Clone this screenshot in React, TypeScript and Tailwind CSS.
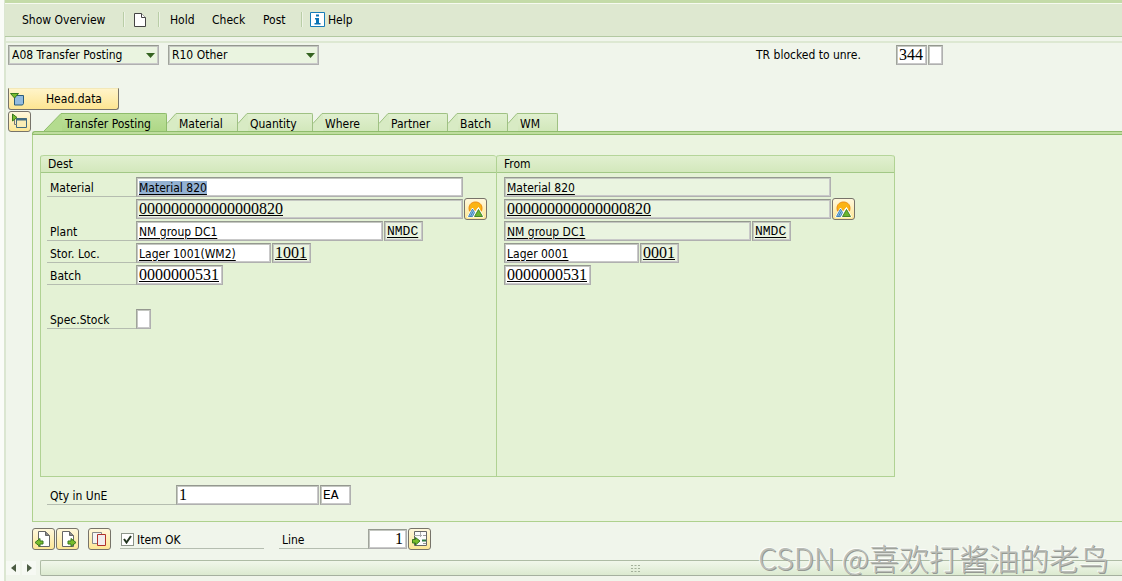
import { useEffect, useRef, type ReactNode } from "react";

const cx = (...parts: (string | false | undefined)[]) => parts.filter(Boolean).join(" ");

type FieldProps = {
  label: string;
  value: string;
  width: string;
  readOnly?: boolean;
  kind?: "text" | "digits" | "code";
  underline?: boolean;
  align?: "left" | "right";
  selected?: boolean;
  id?: string;
};

function Field({ label, value, width, readOnly, kind = "text", underline = true, align = "left", selected, id }: FieldProps) {
  const ref = useRef<HTMLInputElement>(null);
  useEffect(() => {
    if (selected && ref.current) {
      ref.current.focus();
      ref.current.select();
    }
  }, [selected]);
  return (
    <input
      ref={ref}
      id={id}
      aria-label={label}
      defaultValue={value}
      readOnly={readOnly}
      className={cx(
        "h-5 shrink-0 border border-[#b0b0b0] border-t-[#94988f] border-l-[#a0a49b] pl-[2px] text-black shadow-[inset_1px_1px_0_#c4c7c1,inset_-1px_-1px_0_#c9c9c9] outline-none selection:bg-[#94b1d2] selection:text-black",
        width,
        readOnly ? "bg-[#eaf4e0]" : "bg-white",
        kind === "text" && "pt-px text-[12px]",
        kind === "digits" && "font-['Liberation_Serif',serif] text-[16px]",
        kind === "code" && "font-['Liberation_Mono',monospace] text-[13px]",
        underline && kind === "digits" && "underline decoration-1 underline-offset-1",
        underline && kind !== "digits" && "underline decoration-1 underline-offset-2",
        align === "right" && "pr-[3px] text-right",
      )}
    />
  );
}

function Row({ label, htmlFor, labelWidth = "w-[89px]", children }: { label?: string; htmlFor?: string; labelWidth?: string; children: ReactNode }) {
  return (
    <div className="flex h-[22px] items-start">
      {label !== undefined && (
        <label
          htmlFor={htmlFor}
          className={cx("h-5 shrink-0 pt-px pl-[3px] leading-5", labelWidth, label !== "" && "border-b border-[#b5bdb0]")}
        >
          {label}
        </label>
      )}
      <div className="flex items-center gap-px">{children}</div>
    </div>
  );
}

function IconButton({ label, children, small }: { label: string; children: ReactNode; small?: boolean }) {
  return (
    <button
      type="button"
      aria-label={label}
      className={cx(
        "flex w-[23px] shrink-0 items-center justify-center rounded-[3px] border border-[#77736a] bg-linear-to-b from-[#fff8dc] to-[#fde795]",
        small ? "h-[21px]" : "-my-px h-[22px]",
      )}
    >
      {children}
    </button>
  );
}

function PictureIcon() {
  return (
    <svg width="17" height="17" viewBox="0 0 17 17" aria-hidden="true">
      <path d="M2.500 10C.8 4.500 4 1 8.500 1s7.700 3.500 6 9z" fill="#fbb414" stroke="#ee8b0c" />
      <path d="M.5 16 5.500 7l2.500 4 3.500-4.500L16.500 16z" fill="#fff" stroke="#fff" />
      <path d="M1.500 15.500 5.500 8l2 3.500-2 4z" fill="#8ec1e6" stroke="#2c74ad" strokeWidth=".8" />
      <path d="m3.500 15.500 2.500-5" stroke="#2c74ad" strokeWidth=".8" />
      <path d="M7.500 15.500 11.500 8.500l4 7z" fill="#6ab52e" stroke="#3b7e1e" strokeWidth=".9" />
    </svg>
  );
}

function PreviousItemIcon() {
  return (
    <svg width="19" height="19" viewBox="0 0 19 19" aria-hidden="true">
      <path d="M4.500 1.500h7l4 4v11h-11z" fill="#fff" stroke="#666" />
      <path d="M11.500 1.500v4h4" fill="#888" stroke="#666" />
      <path d="m1 12.500 5-4v2.500h3v3H6v2.500z" fill="#78bc2c" stroke="#38791d" />
    </svg>
  );
}

function NextItemIcon() {
  return (
    <svg width="19" height="19" viewBox="0 0 19 19" aria-hidden="true">
      <path d="M4.500 1.500h7l4 4v11h-11z" fill="#fff" stroke="#666" />
      <path d="M11.500 1.500v4h4" fill="#888" stroke="#666" />
      <path d="m18 12.500-5-4v2.500h-3v3h3v2.500z" fill="#78bc2c" stroke="#38791d" />
    </svg>
  );
}

function CopyIcon() {
  return (
    <svg width="17" height="17" viewBox="0 0 17 17" aria-hidden="true">
      <path d="M1.500 1.500h9v11h-9z" fill="#f4f4f4" stroke="#888" />
      <path d="M6.500 3.500h8v11h-8z" fill="#f1ecec" stroke="#b0312b" />
    </svg>
  );
}

function GoToLineIcon() {
  return (
    <svg width="18" height="18" viewBox="0 0 18 18" aria-hidden="true">
      <path d="M3.500 1.500h12v14h-12z" fill="#fbfbfb" stroke="#666" />
      <path d="M3 5.500h8M9.500 2v5" stroke="#aaa" fill="none" />
      <path d="M12 5.500h3M12 13.500h3" stroke="#999" />
      <path d="M11 10.500h4" stroke="#2e7a45" strokeWidth="2" />
      <path d="M1.500 9.500h3v-2l4.500 3.500L4.500 15v-2h-3z" fill="#78bc2c" stroke="#38791d" />
    </svg>
  );
}

function Tab({ label, width, active }: { label: string; width: string; active?: boolean }) {
  return (
    <button type="button" role="tab" aria-selected={!!active} className={cx("flex h-[18px] items-stretch text-left", width)}>
      {active ? (
        <svg width="18" height="18" viewBox="0 0 18 18" className="shrink-0" aria-hidden="true">
          <path d="M0 18 17 .5h1V18z" fill="#b4dc8f" />
          <path d="M0 18 17 .5h1" fill="none" stroke="#8fbc6c" />
        </svg>
      ) : (
        <svg width="10" height="18" viewBox="0 0 10 18" className="shrink-0" aria-hidden="true">
          <path d="M0 10 9 .5h1V18H0z" fill="#d8ebc4" />
          <path d="M0 10.500 9 .5h1" fill="none" stroke="#9fc183" />
        </svg>
      )}
      <span
        className={cx(
          "min-w-0 flex-1 rounded-tr-[2px] border-t border-r leading-5 whitespace-nowrap",
          active
            ? "border-[#8fbc6c] bg-linear-to-b from-[#bde09b] to-[#aed786] pl-[3px]"
            : "border-[#9fc183] bg-linear-to-b from-[#e0f0cf] to-[#d2e7bb] pl-[2px]",
        )}
      >
        {label}
      </span>
    </button>
  );
}

const tabs = [
  { label: "Transfer Posting", width: "w-[123px]", active: true },
  { label: "Material", width: "w-[71px]" },
  { label: "Quantity", width: "w-[75px]" },
  { label: "Where", width: "w-[66px]" },
  { label: "Partner", width: "w-[69px]" },
  { label: "Batch", width: "w-[60px]" },
  { label: "WM", width: "w-[50px]" },
];

function Dropdown({ label, value }: { label: string; value: string }) {
  return (
    <div className="grid w-[151px]">
      <select
        aria-label={label}
        className="col-start-1 row-start-1 h-5 appearance-none border border-[#b0b0b0] border-t-[#94988f] border-l-[#a0a49b] bg-[#eaf4e0] pl-[3px] text-[12px] leading-4 text-black shadow-[inset_1px_1px_0_#c4c7c1,inset_-1px_-1px_0_#c9c9c9]"
      >
        <option>{value}</option>
      </select>
      <svg width="9" height="5" viewBox="0 0 9 5" className="pointer-events-none col-start-1 row-start-1 mr-1 self-center justify-self-end" aria-hidden="true">
        <path d="M0 0h9L4.500 5z" fill="#356321" />
      </svg>
    </div>
  );
}

function Separator() {
  return <span className="h-[15px] w-[2px] border-l border-[#b9cda6] bg-[#edf3e5]" />;
}

function PanelTitle({ children }: { children: ReactNode }) {
  return (
    <h2 className="h-[18px] rounded-t-[3px] border-t border-b border-t-[#b5d59a] border-b-[#a2c886] bg-linear-to-b from-[#e1f0d0] to-[#d3e8bc] pl-[7px] leading-[17px]">
      {children}
    </h2>
  );
}

export default function App() {
  return (
    <div className="flex min-h-screen flex-col overflow-hidden bg-[#fafcf8] pl-1 font-['DejaVu_Sans_Condensed','DejaVu_Sans',sans-serif] text-[12px] text-black">
      <div className="flex flex-1 flex-col border-l-2 border-[#dbe6d1] bg-[#f0f5eb]">
        <header className="-ml-px border-t-[3px] border-[#c4dba8]">
          <nav className="flex h-[34px] items-center border-t border-b border-t-[#f6faf0] border-b-[#b3c9a2] bg-[#dee8d0] pb-px pl-[17px]">
            <button type="button" className="w-[101px] text-left whitespace-nowrap">Show Overview</button>
            <Separator />
            <button type="button" aria-label="Create" className="ml-[8px] mr-[11px]">
              <svg width="14" height="16" viewBox="0 0 14 16" className="block" aria-hidden="true">
                <path d="M1.500 1.500h7l4 4v9h-11z" fill="#fff" stroke="#444" />
                <path d="M8.500 1.500v4h4" fill="#fff" stroke="#444" />
              </svg>
            </button>
            <Separator />
            <button type="button" className="ml-[10px] w-[42px] text-left">Hold</button>
            <button type="button" className="w-[51px] text-left">Check</button>
            <button type="button" className="w-[38px] text-left">Post</button>
            <Separator />
            <button type="button" className="ml-[7px] flex items-center gap-[3px]">
              <svg width="15" height="15" viewBox="0 0 15 15" aria-hidden="true">
                <path d="M.5.5h14v14H.5z" fill="#fff" stroke="#167cb8" />
                <path d="M6 2.500h3v2H6zM5 6h4v5h1.500v1.500h-6V11H6V7.500H5z" fill="#0873b5" />
              </svg>
              Help
            </button>
          </nav>
        </header>

        <main className="mt-1 flex flex-col border-t-2 border-[#dde8d2] pt-[2px]">
          <div className="flex items-center pl-[2px]">
            <Dropdown label="Action" value="A08 Transfer Posting" />
            <div className="ml-[9px]">
              <Dropdown label="Reference document" value="R10 Other" />
            </div>
            <div className="ml-[437px] flex items-center">
              <label htmlFor="movement" className="w-[140px]">TR blocked to unre.</label>
              <div className="flex gap-px">
                <Field id="movement" label="Movement type" value="344" width="w-[31px]" kind="digits" underline={false} />
                <Field label="Special stock indicator" value="" width="w-[15px]" />
              </div>
            </div>
          </div>

          <div className="mt-[23px] pl-[2px]">
            <button
              type="button"
              className="flex h-[22px] w-[111px] items-center rounded-b-[3px] border border-[#77736a] border-t-[#f3e8b8] bg-linear-to-b from-[#fff4c9] to-[#fde591] pl-px"
            >
              <svg width="16" height="15" viewBox="0 0 16 15" aria-hidden="true">
                <path d="M5.500 3.500h8v8l-1 1.500h-8V6z" fill="#93bbdf" stroke="#2b5c7c" />
                <path d="M.5 1.500h8L4.500 6z" fill="#78bc2c" stroke="#38791d" />
              </svg>
              <span className="ml-5">Head.data</span>
            </button>
          </div>

          <div className="flex pl-[2px]">
            <div className="w-6 shrink-0 pt-px">
              <IconButton label="Item overview" small>
                <svg width="17" height="17" viewBox="0 0 17 17" aria-hidden="true">
                  <path d="M5.500 5.500h10v9h-10z" fill="#fbedb5" stroke="#426b80" />
                  <path d="M5 6.500h11" stroke="#426b80" strokeWidth="2" />
                  <path d="M3.500 7v4.500H6" fill="none" stroke="#777" />
                  <path d="M1.500 1v7L6 4.500z" fill="#78bc2c" stroke="#38791d" />
                </svg>
              </IconButton>
            </div>
            <section className="min-w-0 flex-1 pt-[3px]">
              <div role="tablist" className="flex pl-3">
                {tabs.map((tab) => (
                  <Tab key={tab.label} {...tab} />
                ))}
              </div>
              <div className="h-1 rounded-tl-[3px] border-t border-b border-l border-[#8fbc6c] bg-[#bfdd9f]" />
              <div className="border-b border-l border-[#aed18d] bg-[#ebf4e0] pt-5 pr-2 pb-[14px] pl-[7px]">
                <div className="grid max-w-[855px] grid-cols-[456px_minmax(390px,1fr)]">
                  <section className="min-h-[322px] rounded-tl-[3px] border-b border-l border-[#b0d293] bg-[#e4f2d5]">
                    <PanelTitle>Dest</PanelTitle>
                    <div className="pt-1 pl-[6px]">
                      <Row label="Material" htmlFor="dest-material">
                        <Field id="dest-material" label="Material" value="Material 820" width="w-[327px]" selected />
                      </Row>
                      <Row label="">
                        <Field label="Material number" value="000000000000000820" width="w-[327px]" kind="digits" readOnly />
                        <IconButton label="Show material"><PictureIcon /></IconButton>
                      </Row>
                      <Row label="Plant" htmlFor="dest-plant">
                        <Field id="dest-plant" label="Plant" value="NM group DC1" width="w-[247px]" />
                        <Field label="Plant code" value="NMDC" width="w-[39px]" kind="code" readOnly />
                      </Row>
                      <Row label="Stor. Loc." htmlFor="dest-location">
                        <Field id="dest-location" label="Storage location" value="Lager 1001(WM2)" width="w-[135px]" />
                        <Field label="Storage location code" value="1001" width="w-[39px]" kind="digits" readOnly />
                      </Row>
                      <Row label="Batch" htmlFor="dest-batch">
                        <Field id="dest-batch" label="Batch" value="0000000531" width="w-[87px]" kind="digits" />
                      </Row>
                      <div className="mt-[22px]">
                        <Row label="Spec.Stock" htmlFor="dest-stock">
                          <Field id="dest-stock" label="Special stock" value="" width="w-[15px]" />
                        </Row>
                      </div>
                    </div>
                  </section>
                  <section className="rounded-t-[3px] border-r border-b border-l border-[#b0d293] bg-[#e4f2d5]">
                    <PanelTitle>From</PanelTitle>
                    <div className="pt-1 pl-[7px]">
                      <Row>
                        <Field label="From material" value="Material 820" width="w-[327px]" readOnly />
                      </Row>
                      <Row>
                        <Field label="From material number" value="000000000000000820" width="w-[327px]" kind="digits" readOnly />
                        <IconButton label="Show source material"><PictureIcon /></IconButton>
                      </Row>
                      <Row>
                        <Field label="From plant" value="NM group DC1" width="w-[247px]" readOnly />
                        <Field label="From plant code" value="NMDC" width="w-[39px]" kind="code" readOnly />
                      </Row>
                      <Row>
                        <Field label="From storage location" value="Lager 0001" width="w-[135px]" />
                        <Field label="From storage location code" value="0001" width="w-[39px]" kind="digits" readOnly />
                      </Row>
                      <Row>
                        <Field label="From batch" value="0000000531" width="w-[87px]" kind="digits" />
                      </Row>
                    </div>
                  </section>
                </div>
                <div className="mt-2 pl-[7px]">
                  <Row label="Qty in UnE" htmlFor="quantity" labelWidth="w-[129px]">
                    <Field id="quantity" label="Quantity" value="1" width="w-[143px]" kind="digits" underline={false} />
                    <Field label="Unit" value="EA" width="w-[31px]" kind="code" underline={false} />
                  </Row>
                </div>
              </div>

              <div className="mt-[7px] flex h-[21px] items-start">
                <div className="flex gap-px">
                  <IconButton label="Previous item"><PreviousItemIcon /></IconButton>
                  <IconButton label="Next item"><NextItemIcon /></IconButton>
                </div>
                <div className="ml-[9px] flex">
                  <IconButton label="Distribute quantity"><CopyIcon /></IconButton>
                </div>
                <label className="ml-[9px] flex h-5 w-[144px] items-center gap-[3px] border-b border-[#b5bdb0] pt-[2px] pl-px">
                  <span className="grid size-[13px] place-items-center">
                    <input type="checkbox" defaultChecked className="col-start-1 row-start-1 size-[13px] appearance-none border border-[#8d958a] bg-white" />
                    <svg width="9" height="9" viewBox="0 0 9 9" className="pointer-events-none col-start-1 row-start-1" aria-hidden="true">
                      <path d="m1 4 2.500 3.500L8 1" fill="none" stroke="#22351f" strokeWidth="2" />
                    </svg>
                  </span>
                  Item OK
                </label>
                <label htmlFor="line" className="ml-[15px] h-5 w-[89px] border-b border-[#b5bdb0] pt-px pl-[3px] leading-5">Line</label>
                <div className="flex items-center gap-px">
                  <Field id="line" label="Line" value="1" width="w-[39px]" kind="digits" underline={false} align="right" />
                  <IconButton label="Go to line"><GoToLineIcon /></IconButton>
                </div>
              </div>
            </section>
          </div>

          <div className="mt-[10px] flex items-center">
            <button type="button" aria-label="Scroll left" className="flex h-[14px] w-[14px] items-center justify-center bg-[#f6f9f3]">
              <svg width="5" height="8" viewBox="0 0 5 8" aria-hidden="true"><path d="M5 0v8L0 4z" fill="#4c5c43" /></svg>
            </button>
            <button type="button" aria-label="Scroll right" className="ml-[2px] mr-1 flex h-[14px] w-[14px] items-center justify-center bg-[#f6f9f3]">
              <svg width="5" height="8" viewBox="0 0 5 8" aria-hidden="true"><path d="M0 0v8l5-4z" fill="#4c5c43" /></svg>
            </button>
            <div className="relative flex h-4 flex-1 items-center justify-center rounded-l-[2px] border border-r-0 border-[#aebca5] border-b-[#a5b09f] bg-linear-to-b from-[#f1f7eb] to-[#dcead0]">
              <svg width="9" height="7" viewBox="0 0 9 7" className="mr-[-108px]" aria-hidden="true">
                <path d="M0 .5h9M0 3.500h9M0 6.500h9" stroke="#a3b09a" strokeDasharray="2 1.500" />
              </svg>
              <div className="absolute right-[13px] -bottom-1 font-['Noto_Sans_CJK_SC',sans-serif] text-[30px] leading-[44px] font-light whitespace-nowrap text-[#b9bcb6] [text-shadow:1px_1px_0_#959993,-1px_-1px_0_#fafcf8]">
                CSDN @喜欢打酱油的老鸟
              </div>
            </div>
          </div>
        </main>
      </div>
    </div>
  );
}
